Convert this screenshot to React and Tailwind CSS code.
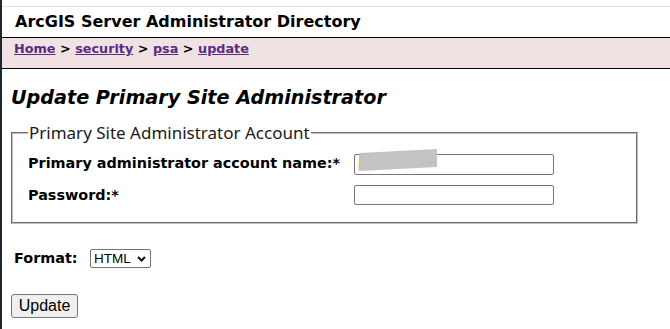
import React from 'react';

const verdana = { fontFamily: '"DejaVu Sans", Verdana, sans-serif' };

const App = () => {
    return (
        <div className="min-h-[329px] w-[670px] bg-white border-l-2 border-[#1c2733] text-black" style={verdana}>
            <div className="h-[6px]" />
            {/* header */}
            <div className="h-[32px] border-t border-[#e2e2e2] border-b border-b-black pl-[13px] pt-[6px]">
                <h1 className="text-[16px] font-bold leading-[18px]">ArcGIS Server Administrator Directory</h1>
            </div>
            <div className="h-[31px] bg-[#f0e2e2] border-b border-black pl-[12px] pt-[2px] text-[12.8px] font-bold leading-[18px]">
                <a href="#" className="text-[#5b2a86] underline">Home</a>
                <span> &gt; </span>
                <a href="#" className="text-[#5b2a86] underline">security</a>
                <span> &gt; </span>
                <a href="#" className="text-[#5b2a86] underline">psa</a>
                <span> &gt; </span>
                <a href="#" className="text-[#5b2a86] underline">update</a>
            </div>

            <div className="pl-[9px]">
                <h2 className="mt-[17px] text-[19.2px] font-bold italic leading-[24px]">Update Primary Site Administrator</h2>

                <fieldset className="mt-[12px] w-[627px] h-[102px] border-2 [border-style:groove] border-[#c0c0c0] pl-[15px] pr-[10px]">
                    <legend className="px-[1px] text-[17px] leading-[22px] text-[#1a1a1a]" style={{ fontFamily: '"Noto Sans", sans-serif' }}>
                        Primary Site Administrator Account
                    </legend>
                    <div className="mt-[9px] grid grid-cols-[326px_200px] gap-y-[11px] items-center text-[14.4px] font-bold">
                        <label htmlFor="adminName" className="leading-[21px]">Primary administrator account name:*</label>
                        <div className="relative h-[21px]">
                            <input
                                id="adminName"
                                type="text"
                                defaultValue="p......"
                                className="w-[200px] h-[21px] border border-[#767676] rounded-[2px] px-[3px] text-[11px] font-normal outline-none"
                            />
                            <svg className="absolute left-[5px] top-[-4px]" width="80" height="26" viewBox="0 0 80 26">
                                <polygon points="0,4 78,0 78,18 0,22" fill="#c3c3c3" />
                            </svg>
                        </div>
                        <label htmlFor="adminPassword" className="leading-[20px]">Password:*</label>
                        <input
                            id="adminPassword"
                            type="password"
                            className="w-[200px] h-[20px] border border-[#767676] rounded-[2px] px-[3px] outline-none"
                        />
                    </div>
                </fieldset>

                <div className="mt-[25px] h-[19px] flex items-center pl-[3px]">
                    <span className="text-[14.4px] font-bold w-[76px]">Format:</span>
                    <div className="h-[19px] w-[61px] border border-[#767676] rounded-[2px] flex items-center justify-between pl-[3px] pr-[4px]" style={{ fontFamily: '"Liberation Sans", Arial, sans-serif' }}>
                        <span className="text-[13.5px] leading-none">HTML</span>
                        <svg width="9" height="6" viewBox="0 0 9 6">
                            <path d="M1 1 L4.5 4.5 L8 1" stroke="#111" strokeWidth="2" fill="none" />
                        </svg>
                    </div>
                </div>

                <button
                    type="button"
                    className="block mt-[26px] h-[24px] w-[67px] bg-[#efefef] border border-[#767676] rounded-[3px] text-[16px] leading-none"
                    style={{ fontFamily: '"Liberation Sans", Arial, sans-serif' }}
                >
                    Update
                </button>
            </div>
        </div>
    );
};

export default App;
